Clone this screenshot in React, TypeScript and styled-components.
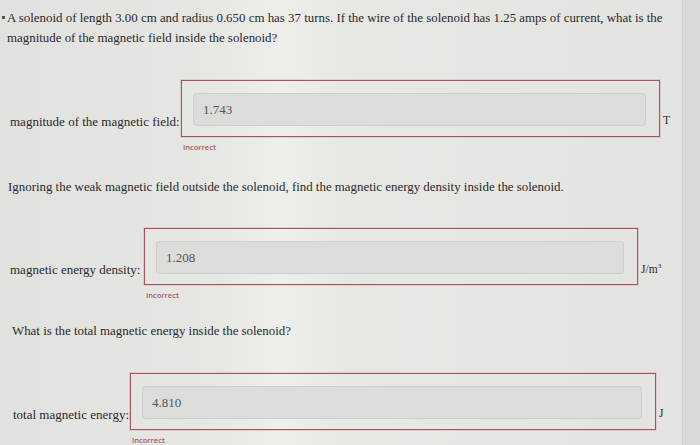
import React from "react"
import styled, { createGlobalStyle } from "styled-components"

const GlobalStyle = createGlobalStyle`
  html, body {
    margin: 0;
    padding: 0;
    background: #e3e3e1;
  }
  #root {
    width: 700px;
    height: 445px;
    overflow: hidden;
  }
`

const Page = styled.div`
  display: flex;
  width: 700px;
  height: 445px;
  font-family: "Liberation Serif", "Times New Roman", serif;
  color: #2a2a2a;
  background: linear-gradient(90deg, #e1e1df 0%, #e6e6e3 30%, #eeeeea 40%, #e7e7e4 50%, #e3e3e1 100%);
`

const Main = styled.div`
  flex: 1;
  display: flex;
  flex-direction: column;
`

const RightEdge = styled.div`
  width: 17px;
  background: #d9d9d7;
  border-left: 1px solid #d0d0ce;
`

const Question = styled.p<{ $top: number; $left: number }>`
  margin: ${(p) => p.$top}px 0 0 ${(p) => p.$left}px;
  font-size: 12.9px;
  line-height: 20px;
  position: relative;
`

const Bullet = styled.span`
  position: absolute;
  left: -5px;
  top: 8px;
  width: 3px;
  height: 3px;
  background: #555;
`

const Row = styled.div<{ $top: number; $left: number }>`
  display: flex;
  align-items: flex-start;
  margin: ${(p) => p.$top}px 0 0 ${(p) => p.$left}px;
`

const Label = styled.div<{ $width: number }>`
  width: ${(p) => p.$width}px;
  flex-shrink: 0;
  padding-top: 34px;
  font-size: 13px;
  white-space: nowrap;
`

const Field = styled.div`
  display: flex;
  flex-direction: column;
`

const OuterBox = styled.div<{ $width: number }>`
  width: ${(p) => p.$width}px;
  height: 57px;
  box-sizing: border-box;
  border: 1.5px solid #a9545d;
  box-shadow: 0 0 0 1px rgba(220, 150, 160, 0.35);
  padding: 12px 13px 10px 11px;
  display: flex;
`

const Input = styled.div`
  flex: 1;
  background: #dcdcda;
  border: 1px solid #cfcfcd;
  border-radius: 3px;
  padding: 8px 9px 4px;
  font-size: 13px;
  color: #555;
`

const Incorrect = styled.div`
  margin: 5px 0 0 2px;
  font-family: "Open Sans", "Liberation Sans", sans-serif;
  font-size: 7.5px;
  font-weight: 600;
  color: #a85a5e;
`

const Unit = styled.div`
  padding: 34px 0 0 3px;
  font-size: 11.5px;
`

type AnswerProps = {
  top: number
  left: number
  label: string
  labelWidth: number
  boxWidth: number
  value: string
  unit: React.ReactNode
}

const Answer = ({ top, left, label, labelWidth, boxWidth, value, unit }: AnswerProps) => (
  <Row $top={top} $left={left}>
    <Label $width={labelWidth}>{label}</Label>
    <Field>
      <OuterBox $width={boxWidth}>
        <Input>{value}</Input>
      </OuterBox>
      <Incorrect>Incorrect</Incorrect>
    </Field>
    <Unit>{unit}</Unit>
  </Row>
)

export default function App() {
  return (
    <>
      <GlobalStyle />
      <Page>
        <Main>
          <Question $top={8} $left={7}>
            <Bullet />
            A solenoid of length 3.00 cm and radius 0.650 cm has 37 turns. If the wire of the solenoid has 1.25 amps of current, what is the
            <br />
            magnitude of the magnetic field inside the solenoid?
          </Question>
          <Answer
            top={32}
            left={10}
            label="magnitude of the magnetic field:"
            labelWidth={171}
            boxWidth={479}
            value="1.743"
            unit="T"
          />
          <Question $top={25} $left={8}>
            Ignoring the weak magnetic field outside the solenoid, find the magnetic energy density inside the solenoid.
          </Question>
          <Answer
            top={31}
            left={10}
            label="magnetic energy density:"
            labelWidth={134}
            boxWidth={494}
            value="1.208"
            unit={
              <>
                J/m<sup style={{ fontSize: "7px" }}>3</sup>
              </>
            }
          />
          <Question $top={21} $left={12}>
            What is the total magnetic energy inside the solenoid?
          </Question>
          <Answer
            top={32}
            left={13}
            label="total magnetic energy:"
            labelWidth={117}
            boxWidth={526}
            value="4.810"
            unit="J"
          />
        </Main>
        <RightEdge />
      </Page>
    </>
  )
}
